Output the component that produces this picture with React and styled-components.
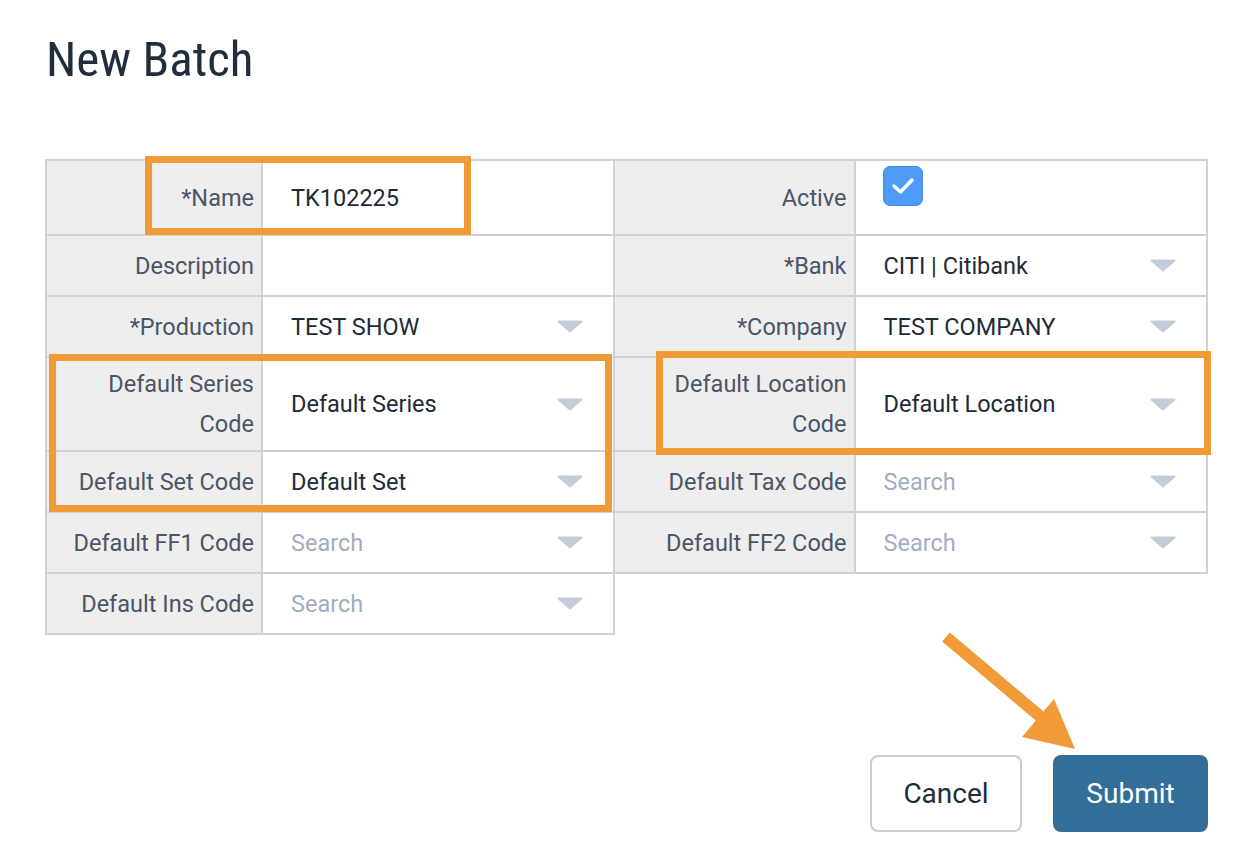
import React from "react";
import styled, { createGlobalStyle } from "styled-components";

const GlobalStyle = createGlobalStyle`
  body {
    margin: 0;
    background: #ffffff;
    font-family: Roboto, "Liberation Sans", sans-serif;
  }
`;

const Page = styled.div`
  position: relative;
  width: 1252px;
  height: 866px;
  box-sizing: border-box;
  padding: 0 44px 0 45px;
  display: flex;
  flex-direction: column;
`;

const Title = styled.h1`
  margin: 28px 0 0 1px;
  font-size: 49px;
  font-weight: 400;
  font-stretch: 82%;
  line-height: 64px;
  color: #1f2d3d;
`;

const Tables = styled.div`
  display: flex;
  align-items: flex-start;
  margin-top: 67px;
`;

const Table = styled.table`
  border-collapse: collapse;
  table-layout: fixed;
  width: ${(p) => p.$width}px;
  & + & {
    margin-left: -2px;
  }
`;

const Row = styled.tr`
  height: ${(p) => p.$h || 61}px;
`;

const Label = styled.td`
  width: ${(p) => p.$w}px;
  box-sizing: border-box;
  background: #eeeeee;
  border: 2px solid #d2d2d2;
  padding: 6px 7px 6px 8px;
  text-align: right;
  white-space: nowrap;
  font-size: 23.5px;
  line-height: 40px;
  color: #4a5568;
  vertical-align: middle;
`;

const Value = styled.td`
  border: 2px solid #d2d2d2;
  padding: 0;
  vertical-align: ${(p) => (p.$top ? "top" : "middle")};
`;

const Field = styled.div`
  display: flex;
  align-items: center;
  justify-content: space-between;
  padding: ${(p) => (p.$top ? "5px 30px 0 27px" : "0 30px 0 28px")};
  font-size: 23.5px;
  line-height: 40px;
  color: ${(p) => (p.$placeholder ? "#a0aec0" : "#1f2a37")};
`;

const Checkbox = styled.span`
  display: flex;
  align-items: center;
  justify-content: center;
  width: 38px;
  height: 38px;
  border: 1px solid #3f8ce8;
  border-radius: 7px;
  background: #4d9bf7;
`;

const Footer = styled.div`
  display: flex;
  justify-content: flex-end;
  gap: 31px;
  margin-top: 120px;
`;

const Button = styled.button`
  box-sizing: border-box;
  width: ${(p) => (p.$primary ? 155 : 152)}px;
  height: 77px;
  border-radius: 8px;
  border: 2px solid ${(p) => (p.$primary ? "#336e99" : "#cdcdcd")};
  background: ${(p) => (p.$primary ? "#336e99" : "#ffffff")};
  color: ${(p) => (p.$primary ? "#ffffff" : "#1f2d3d")};
  font-family: Roboto, "Liberation Sans", sans-serif;
  font-size: 28px;
  cursor: pointer;
`;

// annotation layer drawn over the form
const Highlight = styled.div`
  position: absolute;
  left: ${(p) => p.$x}px;
  top: ${(p) => p.$y}px;
  width: ${(p) => p.$w}px;
  height: ${(p) => p.$h}px;
  box-sizing: border-box;
  border: 7px solid #f09a38;
  pointer-events: none;
`;

const ArrowSvg = styled.svg`
  position: absolute;
  left: 920px;
  top: 620px;
  pointer-events: none;
`;

const Caret = () => (
  <svg width="26" height="13" viewBox="0 0 26 13">
    <path
      d="M1.5 1.5 H24.5 L13 11.5 Z"
      fill="#c4ccd9"
      stroke="#c4ccd9"
      strokeWidth="2"
      strokeLinejoin="round"
    />
  </svg>
);

const Check = () => (
  <svg width="24" height="20" viewBox="0 0 24 20">
    <polyline
      points="3,10 9.5,16 21,4"
      fill="none"
      stroke="#ffffff"
      strokeWidth="3.5"
      strokeLinecap="round"
      strokeLinejoin="round"
    />
  </svg>
);

const leftRows = [
  { label: "*Name", value: "TK102225", h: 75, plain: true },
  { label: "Description", value: "", plain: true },
  { label: "*Production", value: "TEST SHOW" },
  { label: ["Default Series", "Code"], value: "Default Series", h: 94 },
  { label: "Default Set Code", value: "Default Set" },
  { label: "Default FF1 Code", placeholder: "Search" },
  { label: "Default Ins Code", placeholder: "Search" },
];

const rightRows = [
  { label: "Active", check: true, h: 75 },
  { label: "*Bank", value: "CITI | Citibank" },
  { label: "*Company", value: "TEST COMPANY" },
  { label: ["Default Location", "Code"], value: "Default Location", h: 94 },
  { label: "Default Tax Code", placeholder: "Search" },
  { label: "Default FF2 Code", placeholder: "Search" },
];

function FormTable({ rows, width, labelWidth }) {
  return (
    <Table $width={width}>
      <tbody>
        {rows.map((r, i) => (
          <Row key={i} $h={r.h}>
            <Label $w={labelWidth}>
              {Array.isArray(r.label) ? (
                <>
                  {r.label[0]}
                  <br />
                  {r.label[1]}
                </>
              ) : (
                r.label
              )}
            </Label>
            <Value $top={r.check}>
              {r.check ? (
                <Field $top>
                  <Checkbox>
                    <Check />
                  </Checkbox>
                </Field>
              ) : (
                <Field $placeholder={!!r.placeholder}>
                  <span>{r.value || r.placeholder}</span>
                  {!r.plain && <Caret />}
                </Field>
              )}
            </Value>
          </Row>
        ))}
      </tbody>
    </Table>
  );
}

export default function App() {
  return (
    <>
      <GlobalStyle />
      <Page>
        <Title>New Batch</Title>
        <Tables>
          <FormTable rows={leftRows} width={570} labelWidth={216} />
          <FormTable rows={rightRows} width={596} labelWidth={241} />
        </Tables>
        <Footer>
          <Button type="button">Cancel</Button>
          <Button type="button" $primary>
            Submit
          </Button>
        </Footer>

        <Highlight $x={145} $y={156} $w={326} $h={79} />
        <Highlight $x={49} $y={354} $w={563} $h={158} />
        <Highlight $x={656} $y={351} $w={555} $h={104} />
        <ArrowSvg width="180" height="150" viewBox="0 0 180 150">
          <line
            x1="26"
            y1="17"
            x2="122"
            y2="98"
            stroke="#f09a38"
            strokeWidth="12"
          />
          <polygon points="155,129 102,117 134,79" fill="#f09a38" />
        </ArrowSvg>
      </Page>
    </>
  );
}
